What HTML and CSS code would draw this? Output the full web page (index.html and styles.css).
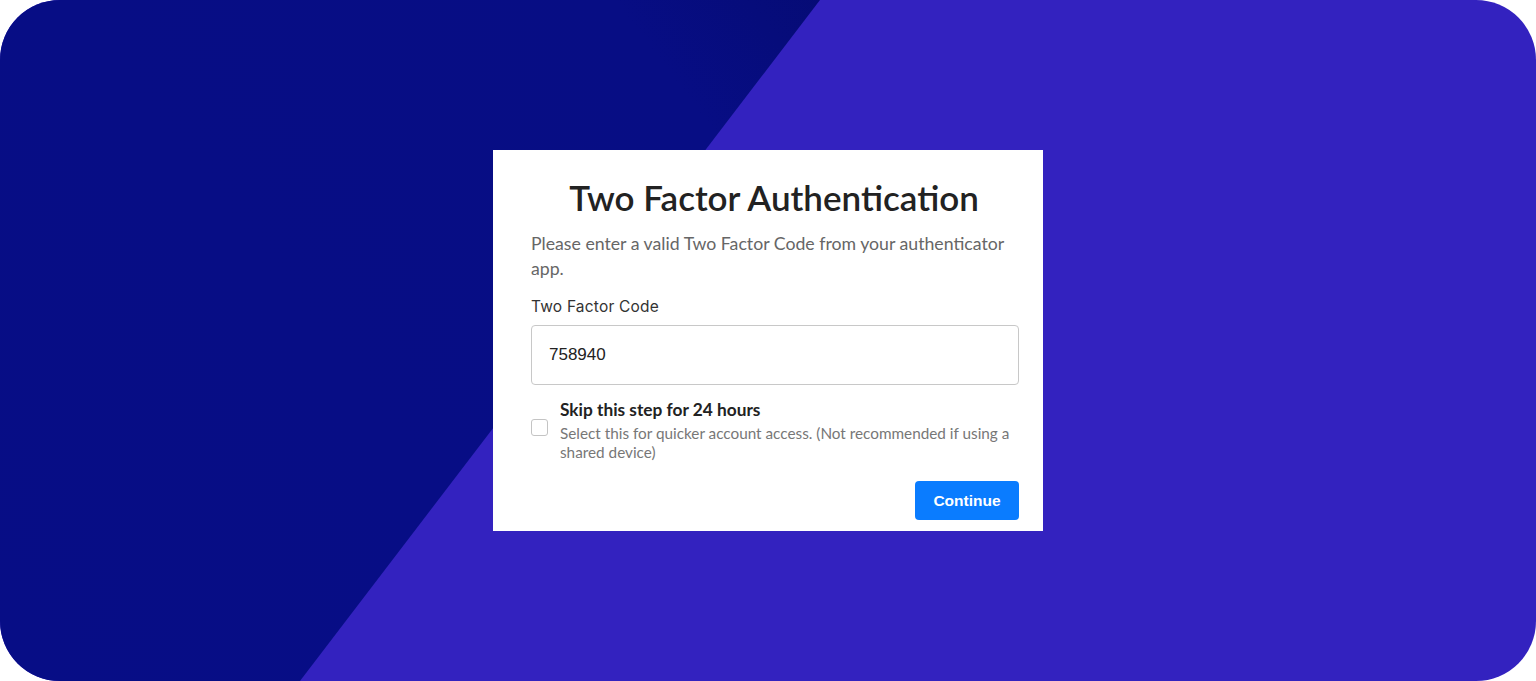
FILE: index.html
```html
<!DOCTYPE html>
<html lang="en">
<head>
<meta charset="utf-8">
<title>Two Factor Authentication</title>
<link rel="stylesheet" href="styles.css">
</head>
<body>
<div class="stage">
  <form class="card">
    <h1 class="title">Two Factor Authentication</h1>
    <p class="intro">Please enter a valid Two Factor Code from your authenticator app.</p>
    <label class="label" for="code">Two Factor Code</label>
    <input class="input" id="code" type="text" value="758940">
    <div class="skip">
      <span class="check"></span>
      <div class="skip-text">
        <div class="skip-title">Skip this step for 24 hours</div>
        <div class="skip-desc">Select this for quicker account access. (Not recommended if using a shared device)</div>
      </div>
    </div>
    <div class="actions">
      <button class="btn" type="button">Continue</button>
    </div>
  </form>
</div>
</body>
</html>
```
FILE: styles.css
```css
html, body {
  margin: 0;
  padding: 0;
  background: #ffffff;
}
.stage {
  position: relative;
  width: 1536px;
  height: 681px;
  border-radius: 60px;
  overflow: hidden;
  background: #3322bf;
  display: flex;
  align-items: center;
  justify-content: center;
}
.stage::before {
  content: "";
  position: absolute;
  inset: 0;
  background: linear-gradient(53deg, #070d86 0%, #070d84 55%, #050b72 68%);
  clip-path: polygon(0 0, 820px 0, 300px 100%, 0 100%);
}
.card {
  position: relative;
  width: 550px;
  box-sizing: border-box;
  background: #ffffff;
  padding: 23px 24px 11px 38px;
  display: flex;
  flex-direction: column;
  font-family: Lato, "Liberation Sans", sans-serif;
}
.title {
  margin: 0 0 10px;
  text-align: center;
  font-family: Lato, sans-serif;
  font-weight: 600;
  font-size: 35px;
  line-height: 48px;
  color: #222222;
  padding-right: 2px;
}
.intro {
  margin: 0 0 16px;
  font-size: 17.7px;
  line-height: 25px;
  color: #666666;
}
.label {
  font-family: Inter, sans-serif;
  font-size: 15.5px;
  line-height: 20px;
  letter-spacing: 0.2px;
  color: #333333;
  margin-bottom: 8px;
}
.input {
  width: 488px;
  height: 60px;
  box-sizing: border-box;
  border: 1px solid #c8c8c8;
  border-radius: 4px;
  padding: 0 17px;
  font-family: "Liberation Sans", Arial, sans-serif;
  font-size: 17px;
  color: #222222;
  margin: 0 0 13px;
  outline: none;
}
.skip {
  display: flex;
  align-items: center;
  gap: 12px;
}
.check {
  flex: none;
  width: 17px;
  height: 17px;
  box-sizing: border-box;
  border: 1px solid #c4c4c4;
  border-radius: 3px;
  background: #ffffff;
  margin-bottom: 5px;
}
.skip-title {
  font-weight: 700;
  font-size: 17.3px;
  line-height: 24px;
  margin-bottom: 2px;
  color: #222222;
}
.skip-desc {
  font-size: 15.3px;
  line-height: 19px;
  color: #777777;
}
.actions {
  display: flex;
  justify-content: flex-end;
  margin-top: 19px;
}
.btn {
  width: 104px;
  height: 39px;
  border: none;
  border-radius: 4px;
  background: #0a7cff;
  color: #ffffff;
  font-family: "Liberation Sans", Arial, sans-serif;
  font-weight: 700;
  font-size: 15.5px;
  cursor: pointer;
}
```
